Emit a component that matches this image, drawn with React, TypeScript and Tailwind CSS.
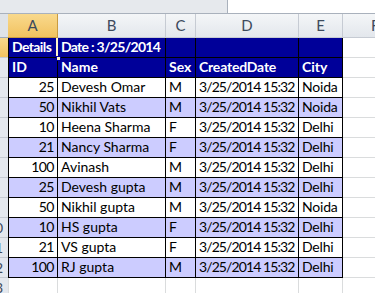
import React from 'react'

type Row = [string, string, string, string, string]

const data: Row[] = [
  ['25', 'Devesh Omar', 'M', '3/25/2014 15:32', 'Noida'],
  ['50', 'Nikhil Vats', 'M', '3/25/2014 15:32', 'Noida'],
  ['10', 'Heena Sharma', 'F', '3/25/2014 15:32', 'Delhi'],
  ['21', 'Nancy Sharma', 'F', '3/25/2014 15:32', 'Delhi'],
  ['100', 'Avinash', 'M', '3/25/2014 15:32', 'Delhi'],
  ['25', 'Devesh gupta', 'M', '3/25/2014 15:32', 'Delhi'],
  ['50', 'Nikhil gupta', 'M', '3/25/2014 15:32', 'Noida'],
  ['10', 'HS gupta', 'F', '3/25/2014 15:32', 'Delhi'],
  ['21', 'VS gupta', 'F', '3/25/2014 15:32', 'Delhi'],
  ['100', 'RJ gupta', 'M', '3/25/2014 15:32', 'Delhi'],
]

const RowHead = ({ n, active }: { n: number; active?: boolean }) => (
  <div
    className={`w-[8px] shrink-0 overflow-hidden border-b border-[#c6cbd3] text-[14px] text-[#3d4a5c] leading-[19px] ${
      active ? 'bg-gradient-to-b from-[#f9d98c] to-[#f1c25f]' : 'bg-[#e4e8ee]'
    }`}
  >
    <div className="w-[26px] ml-[-18px] text-center">{n}</div>
  </div>
)

const Cell = ({ children, className = '' }: { children?: React.ReactNode; className?: string }) => (
  <div className={`shrink-0 h-full border-r border-b border-black px-[3px] flex items-end pb-[1px] whitespace-nowrap overflow-hidden leading-[18px] ${className}`}>
    {children}
  </div>
)

const Empty = () => <div className="flex-1 h-full border-b border-[#dadcdd]" />

export default function App() {
  return (
    <div className="w-[375px] h-[293px] overflow-hidden bg-white text-[14px] text-black" style={{ fontFamily: 'Lato, "Liberation Sans", sans-serif' }}>
      {/* formula strip */}
      <div className="flex h-[14px] border-b border-[#a9b1bc]">
        <div className="flex-1 bg-[#e6e9ed]" />
        <div className="w-[148px] bg-white border-l border-[#a9b1bc]" />
      </div>

      {/* column headers */}
      <div className="flex h-[24px] text-[15px] text-[#3d4a5c]">
        <div className="w-[8px] shrink-0 bg-[#dfe3e8] border-b border-[#9eabbb]" />
        <div className="w-[50px] shrink-0 flex items-center justify-center border-r border-b border-[#c99b40] bg-gradient-to-b from-[#f9d98c] to-[#f1c25f]">A</div>
        <div className="w-[108px] shrink-0 flex items-center justify-center border-r border-b border-[#c6cbd3] bg-gradient-to-b from-[#f4f6f8] to-[#e3e7ec]">B</div>
        <div className="w-[30px] shrink-0 flex items-center justify-center border-r border-b border-[#c6cbd3] bg-gradient-to-b from-[#f4f6f8] to-[#e3e7ec]">C</div>
        <div className="w-[103px] shrink-0 flex items-center justify-center border-r border-b border-[#c6cbd3] bg-gradient-to-b from-[#f4f6f8] to-[#e3e7ec]">D</div>
        <div className="w-[44px] shrink-0 flex items-center justify-center border-r border-b border-[#c6cbd3] bg-gradient-to-b from-[#f4f6f8] to-[#e3e7ec]">E</div>
        <div className="flex-1 flex items-center pl-[28px] border-b border-[#c6cbd3] bg-gradient-to-b from-[#f4f6f8] to-[#e3e7ec]">F</div>
      </div>

      {/* title row */}
      <div className="flex h-[20px]">
        <RowHead n={1} active />
        <div className="relative w-[50px] shrink-0 h-full">
          <Cell className="w-[50px] border-l bg-[#000099] text-white font-bold tracking-[-0.6px] border-r-2 border-r-[#fff4c8]">Details</Cell>
          <div className="absolute right-[-3px] bottom-[-3px] w-[5px] h-[5px] bg-[#fff4c8] border border-[#000099]" />
        </div>
        <Cell className="w-[108px] bg-[#000099] text-white font-bold tracking-[-0.7px]">Date : 3/25/2014</Cell>
        <Cell className="w-[30px] bg-[#000099]" />
        <Cell className="w-[103px] bg-[#000099]" />
        <Cell className="w-[44px] bg-[#000099]" />
        <Empty />
      </div>

      {/* header row */}
      <div className="flex h-[20px]">
        <RowHead n={2} />
        <Cell className="w-[50px] border-l bg-[#000099] text-white font-bold">ID</Cell>
        <Cell className="w-[108px] bg-[#000099] text-white font-bold">Name</Cell>
        <Cell className="w-[30px] bg-[#000099] text-white font-bold">Sex</Cell>
        <Cell className="w-[103px] bg-[#000099] text-white font-bold tracking-[-0.2px]">CreatedDate</Cell>
        <Cell className="w-[44px] bg-[#000099] text-white font-bold">City</Cell>
        <Empty />
      </div>

      {data.map((r, i) => {
        const bg = i % 2 === 1 ? 'bg-[#ccccff]' : 'bg-white'
        return (
          <div key={i} className="flex h-[20px]">
            <RowHead n={i + 3} />
            <Cell className={`w-[50px] border-l justify-end tracking-[-0.5px] ${bg}`}>{r[0]}</Cell>
            <Cell className={`w-[108px] ${bg}`}>{r[1]}</Cell>
            <Cell className={`w-[30px] ${bg}`}>{r[2]}</Cell>
            <Cell className={`w-[103px] tracking-[-0.9px] ${bg}`}>{r[3]}</Cell>
            <Cell className={`w-[44px] tracking-[-0.2px] ${bg}`}>{r[4]}</Cell>
            <Empty />
          </div>
        )
      })}

      {/* row 13 */}
      <div className="flex h-[20px]">
        <RowHead n={13} />
        <div className="w-[50px] shrink-0 border-l border-r border-b border-[#dadcdd]" />
        <div className="w-[108px] shrink-0 border-r border-b border-[#dadcdd]" />
        <div className="w-[30px] shrink-0 border-r border-b border-[#dadcdd]" />
        <div className="w-[103px] shrink-0 border-r border-b border-[#dadcdd]" />
        <div className="w-[44px] shrink-0 border-r border-b border-[#dadcdd]" />
        <Empty />
      </div>
    </div>
  )
}
